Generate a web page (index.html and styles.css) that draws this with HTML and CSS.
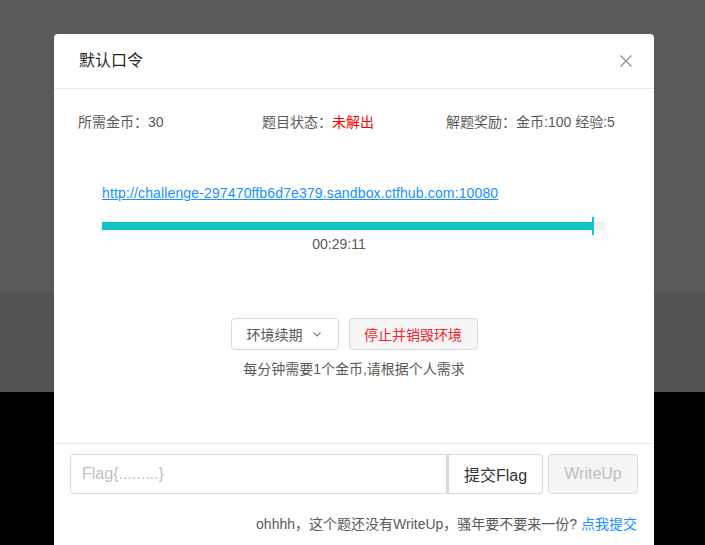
FILE: index.html
```html
<!DOCTYPE html>
<html lang="zh-CN">
<head>
<meta charset="utf-8">
<title>默认口令</title>
<link rel="stylesheet" href="styles.css">
</head>
<body>
<div class="page">
  <div class="bg-top"></div>
  <div class="bg-band"></div>
  <div class="bg-bottom"></div>
</div>
<div class="modal">
  <div class="modal-header">
    <div class="modal-title">默认口令</div>
    <span class="modal-close">
      <svg width="14" height="14" viewBox="0 0 14 14"><path d="M1.5 1.5 L12.5 12.5 M12.5 1.5 L1.5 12.5" stroke="#8c8c8c" stroke-width="1.2" fill="none"/></svg>
    </span>
  </div>
  <div class="modal-body">
    <div class="info-row">
      <div class="info-col">所需金币：30</div>
      <div class="info-col">题目状态：<span class="red">未解出</span></div>
      <div class="info-col">解题奖励：金币:100 经验:5</div>
    </div>
    <div class="env">
      <a class="env-link" href="#">http://challenge-297470ffb6d7e379.sandbox.ctfhub.com:10080</a>
      <div class="progress">
        <div class="progress-track">
          <div class="progress-fill" style="width: 490px"></div>
          <span class="progress-marker"></span>
        </div>
      </div>
      <div class="progress-time">00:29:11</div>
    </div>
    <div class="actions">
      <button class="btn btn-renew">环境续期
        <svg class="chev" width="10" height="10" viewBox="0 0 10 10"><path d="M1.5 3.5 L5 7 L8.5 3.5" stroke="#777" stroke-width="1.1" fill="none"/></svg>
      </button>
      <button class="btn btn-stop">停止并销毁环境</button>
    </div>
    <div class="note">每分钟需要1个金币,请根据个人需求</div>
  </div>
  <div class="modal-footer">
    <div class="flag-row">
      <div class="input-group">
        <input class="flag-input" type="text" placeholder="Flag{.........}">
        <button class="btn-addon">提交Flag</button>
      </div>
      <button class="btn-writeup" disabled>WriteUp</button>
    </div>
    <div class="wu-note">ohhhh，这个题还没有WriteUp，骚年要不要来一份? <a class="link" href="#">点我提交</a></div>
  </div>
</div>
</body>
</html>
```

FILE: styles.css
```css
* { box-sizing: border-box; }
html, body { margin: 0; padding: 0; }
body {
  width: 705px;
  height: 545px;
  overflow: hidden;
  font-family: "Liberation Sans", "Noto Sans CJK SC", sans-serif;
  font-size: 14px;
  color: #595959;
  background: #000;
  position: relative;
}
.page { display: flex; flex-direction: column; height: 545px; }
.bg-top { height: 292px; background: #5a5a5a; }
.bg-band { height: 100px; background: #535455; }
.bg-bottom { flex: 1; background: #000; }

.modal {
  position: absolute;
  left: 54px;
  top: 34px;
  width: 600px;
  height: 530px;
  background: #fff;
  border-radius: 4px;
  display: flex;
  flex-direction: column;
}
.modal-header {
  height: 55px;
  padding: 0 24px;
  border-bottom: 1px solid #e8e8e8;
  display: flex;
  align-items: center;
  justify-content: space-between;
}
.modal-title {
  font-size: 16px;
  color: #262626;
  line-height: 22px;
  padding-left: 1px;
}
.modal-close { display: flex; margin-right: -3px; }

.modal-body {
  padding: 22px 24px 0;
  height: 355px;
  border-bottom: 1px solid #e8e8e8;
}
.info-row { display: flex; line-height: 22px; }
.info-col { width: 184px; }
.red { color: #ff0000; }

.env { padding: 0 24px; margin-top: 49px; }
.env-link {
  display: inline-block;
  color: #1890ff;
  line-height: 22px;
  text-decoration: underline;
  letter-spacing: 0.14px;
}
.progress { margin-top: 18px; }
.progress-track {
  position: relative;
  height: 8px;
  background: #f2f2f2;
}
.progress-fill { height: 8px; background: #13c2c2; }
.progress-marker {
  position: absolute;
  left: 490px;
  top: -5px;
  width: 2px;
  height: 18px;
  background: #13c2c2;
}
.progress-time {
  width: 474px;
  text-align: center;
  line-height: 22px;
  margin-top: 3px;
}

.actions {
  display: flex;
  justify-content: center;
  gap: 10px;
  margin-top: 63px;
}
.btn {
  height: 32px;
  border: 1px solid #d9d9d9;
  border-radius: 4px;
  font-family: inherit;
  font-size: 14px;
  display: flex;
  align-items: center;
  white-space: nowrap;
}
.btn-renew { width: 108px; background: #fff; color: #595959; padding: 0 0 0 15px; }
.chev { margin-left: 9px; }
.btn-stop { width: 129px; background: #f5f5f5; color: #f5222d; justify-content: center; padding: 0; }
.note { text-align: center; line-height: 22px; margin-top: 8px; }

.modal-footer { padding: 10px 16px 0; }
.flag-row { display: flex; gap: 5px; }
.input-group { display: flex; width: 473px; height: 40px; }
.flag-input {
  width: 377px;
  height: 40px;
  border: 1px solid #d9d9d9;
  border-radius: 4px 0 0 4px;
  padding: 0 11px;
  font-family: inherit;
  font-size: 16px;
  color: #595959;
  outline: none;
}
.flag-input::placeholder { color: #bfbfbf; }
.btn-addon {
  width: 96px;
  height: 40px;
  border: 1px solid #d9d9d9;
  border-left-width: 2px;
  border-radius: 0 4px 4px 0;
  background: #fff;
  color: #333;
  font-family: inherit;
  font-size: 16px;
  padding: 0;
}
.btn-writeup {
  width: 90px;
  height: 40px;
  border: 1px solid #d9d9d9;
  border-radius: 4px;
  background: #f5f5f5;
  color: #bfbfbf;
  font-family: inherit;
  font-size: 16px;
  padding: 0;
}
.wu-note {
  text-align: right;
  margin-top: 19px;
  line-height: 22px;
  padding-right: 1px;
}
.link { color: #1890ff; text-decoration: none; }
```
